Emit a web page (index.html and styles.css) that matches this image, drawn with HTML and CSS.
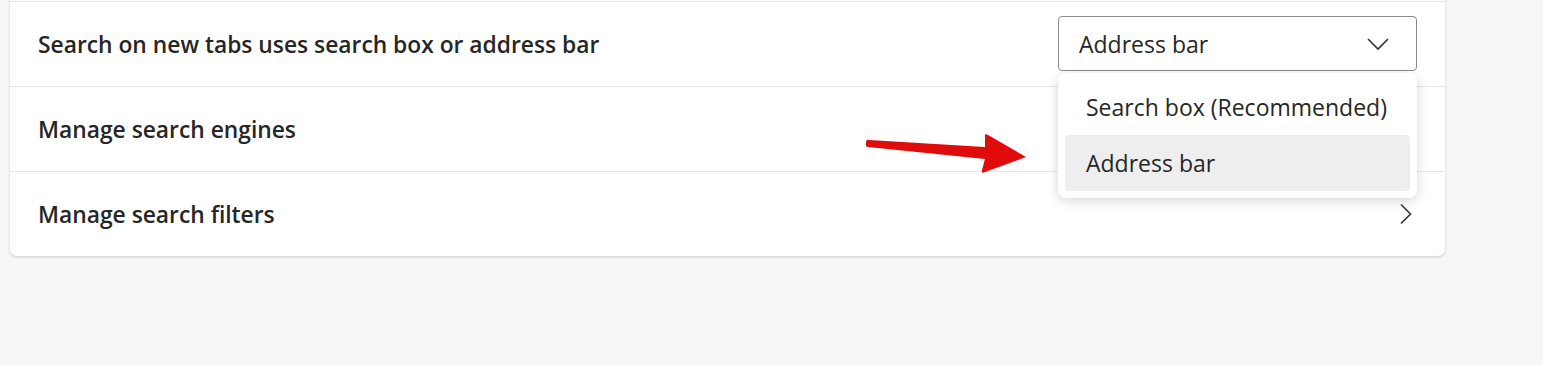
FILE: index.html
```html
<!DOCTYPE html>
<html>
<head>
<meta charset="utf-8">
<link rel="stylesheet" href="styles.css">
</head>
<body>
<div class="page">
  <div class="card">
    <div class="row">
      <span class="label">Search on new tabs uses search box or address bar</span>
      <div class="select-wrap">
        <div class="select">
          <span>Address bar</span>
          <svg class="chev-down" width="24" height="14" viewBox="0 0 24 14"><path d="M2 2 L12 12 L22 2" fill="none" stroke="#333" stroke-width="1.6"/></svg>
        </div>
        <div class="menu">
          <div class="item">Search box (Recommended)</div>
          <div class="item active">Address bar</div>
        </div>
      </div>
    </div>
    <div class="row">
      <span class="label">Manage search engines</span>
    </div>
    <div class="row">
      <span class="label">Manage search filters</span>
      <svg class="chev-right" width="14" height="22" viewBox="0 0 14 22"><path d="M2 1.5 L11.5 11 L2 20.5" fill="none" stroke="#333" stroke-width="1.6"/></svg>
    </div>
  </div>
  <svg class="arrow" width="180" height="50" viewBox="0 0 180 50"><path d="M2 12 Q1 16 4 16 L121 28 L118 39 Q117 43 121 41 L162 26 L124 4 Q120 2 121 6 L121 16 L5 9 Q2 8 2 12 Z" fill="#e00c0c"/></svg>
</div>
</body>
</html>
```
FILE: styles.css
```css
html, body { margin: 0; padding: 0; }
body {
  background: #f7f7f7;
  font-family: "Open Sans", "Noto Sans", sans-serif;
  color: #262626;
  width: 1543px;
  height: 365px;
  overflow: hidden;
}
.page { position: relative; padding: 0 98px 0 10px; }
.card {
  background: #fff;
  border-radius: 0 0 7px 7px;
  box-shadow: 0 1px 3px rgba(0,0,0,0.18);
  margin-top: -5px;
  padding-top: 6px;
  width: 1435px;
}
.row {
  height: 84px;
  border-top: 1px solid #e6e6e6;
  display: flex;
  align-items: center;
  justify-content: space-between;
  padding: 0 34px 0 28px;
}
.label { font-size: 22.8px; font-weight: 600; letter-spacing: 0; }
.select-wrap { position: relative; margin-right: -6px; }
.select {
  width: 359px;
  height: 55px;
  border: 1px solid #8a8a8a;
  border-radius: 4px;
  box-sizing: border-box;
  display: flex;
  align-items: center;
  justify-content: space-between;
  padding: 0 26px 0 20px;
  font-size: 23px;
  background: #fff;
  margin-top: -1px;
}
.menu {
  position: absolute;
  top: 56px;
  left: 0;
  width: 359px;
  background: #fff;
  border-radius: 8px;
  box-shadow: 0 3px 12px rgba(0,0,0,0.16);
  padding: 6px 7px 7px;
  box-sizing: border-box;
  z-index: 2;
}
.item {
  height: 56px;
  display: flex;
  align-items: center;
  padding-left: 21px;
  font-size: 23px;
  border-radius: 4px;
}
.item.active { background: #eeeeee; }
.chev-right { margin-right: -2px; }
.arrow { position: absolute; left: 864px; top: 136px; }
```
